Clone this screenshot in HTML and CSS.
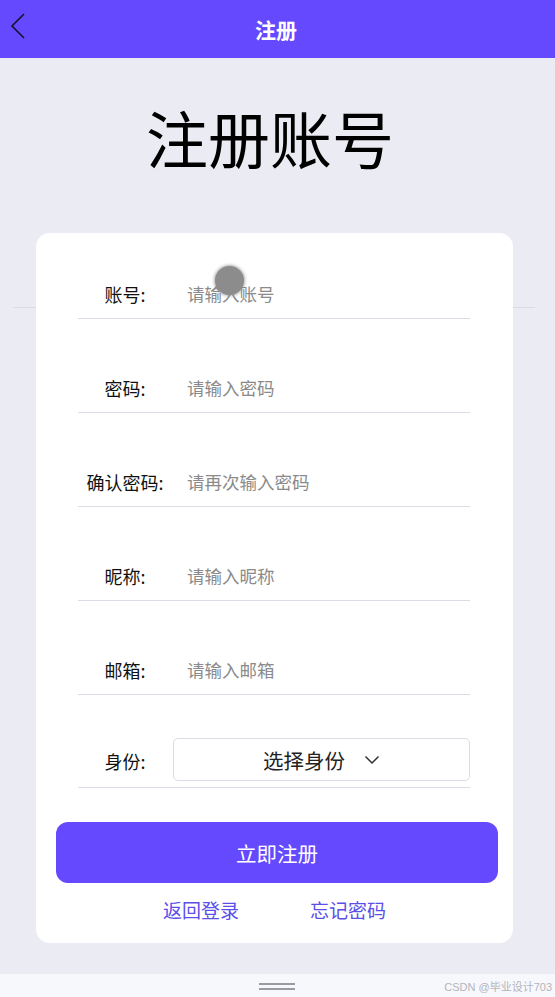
FILE: index.html
```html
<!DOCTYPE html>
<html lang="zh-CN">
<head>
    <meta charset="UTF-8">
    <meta name="viewport" content="width=device-width, initial-scale=1.0">
    <title>注册</title>
    <link rel="stylesheet" href="styles.css">
</head>
<body>
    <div id="page">
        <!-- 顶部导航 -->
        <div class="nav_bar">
            <div class="nav_back">
                <svg width="16" height="26" viewBox="0 0 16 26"><path d="M14 1 L2 13 L14 25" fill="none" stroke="#14142e" stroke-width="1.6"/></svg>
            </div>
            <div class="nav_title">注册</div>
        </div>
        <div class="main_title">注册账号</div>
        <div class="bg_line"></div>
        <!-- 表单 -->
        <div class="reg_card">
            <div class="reg_row">
                <div class="reg_label">账号:</div>
                <input class="reg_input" type="text" placeholder="请输入账号">
            </div>
            <div class="reg_row">
                <div class="reg_label">密码:</div>
                <input class="reg_input" type="password" placeholder="请输入密码">
            </div>
            <div class="reg_row">
                <div class="reg_label">确认密码:</div>
                <input class="reg_input" type="password" placeholder="请再次输入密码">
            </div>
            <div class="reg_row">
                <div class="reg_label">昵称:</div>
                <input class="reg_input" type="text" placeholder="请输入昵称">
            </div>
            <div class="reg_row">
                <div class="reg_label">邮箱:</div>
                <input class="reg_input" type="text" placeholder="请输入邮箱">
            </div>
            <div class="reg_row reg_row_last">
                <div class="reg_label">身份:</div>
                <div class="reg_select">
                    <span>选择身份</span>
                    <svg width="16" height="10" viewBox="0 0 16 10"><path d="M1.5 1.5 L8 8 L14.5 1.5" fill="none" stroke="#333" stroke-width="1.5"/></svg>
                </div>
            </div>
            <div class="reg_btn">立即注册</div>
            <div class="reg_links">
                <span>返回登录</span>
                <span>忘记密码</span>
            </div>
        </div>
        <div class="home_bar">
            <div class="home_handle"></div>
            <div class="home_mark">CSDN @毕业设计703</div>
        </div>
        <div class="touch_dot"></div>
    </div>
</body>
</html>
```

FILE: styles.css
```css
*{
    box-sizing: border-box;
}
body{
    margin: 0;
    background-color: #ebebf3;
    font-family: "Noto Sans CJK SC", "Noto Sans", sans-serif;
}
#page{
    position: relative;
    width: 555px;
    min-height: 997px;
    display: flex;
    flex-direction: column;
}
.nav_bar{
    height: 58px;
    background-color: #6549ff;
    display: flex;
    align-items: center;
    justify-content: center;
    position: relative;
}
.nav_back{
    position: absolute;
    left: 10px;
    top: 13px;
}
.nav_title{
    color: #fff;
    font-size: 21px;
    font-weight: bold;
    margin-left: -3px;
}
.main_title{
    margin-top: 47px;
    text-align: center;
    font-size: 62px;
    line-height: 64px;
    color: #000;
    margin-left: -15px;
}
.bg_line{
    position: absolute;
    top: 307px;
    left: 13px;
    right: 20px;
    height: 1px;
    background-color: #dcdce4;
}
.reg_card{
    position: relative;
    z-index: 1;
    margin-top: 64px;
    margin-left: 36px;
    width: 477px;
    height: 710px;
    background-color: #fff;
    border-radius: 14px;
    padding: 37px 43px 0 42px;
}
.reg_row{
    height: 49px;
    display: flex;
    align-items: center;
    border-bottom: 1px solid #dcdce4;
    margin-bottom: 45px;
}
.reg_row_last{
    margin-bottom: 0;
    height: 48px;
}
.reg_label{
    width: 94px;
    text-align: center;
    font-size: 18px;
    color: #111;
    flex-shrink: 0;
    white-space: nowrap;
}
.reg_row_last .reg_label{
    margin-top: -5px;
}
.reg_input{
    margin-left: 15px;
    flex: 1;
    min-width: 0;
    border: none;
    outline: none;
    font-family: inherit;
    font-size: 17.5px;
    color: #333;
    padding: 0;
    margin-top: -2px;
    background: transparent;
}
.reg_input::placeholder{
    color: #8a8a8a;
}
.reg_select{
    align-self: flex-start;
    margin-left: 1px;
    margin-top: -2px;
    flex: 1;
    height: 43px;
    border: 1px solid #dcdce4;
    border-radius: 5px;
    display: flex;
    align-items: center;
    justify-content: center;
    font-size: 20.5px;
    color: #222;
}
.reg_select>svg{
    margin-left: 19px;
}
.reg_btn{
    margin: 34px -28px 0 -22px;
    height: 61px;
    border-radius: 12px;
    background-color: #6549ff;
    color: #fff;
    font-size: 20.5px;
    display: flex;
    align-items: center;
    justify-content: center;
}
.reg_links{
    margin-top: 13px;
    margin-left: -42px;
    margin-right: -43px;
    display: flex;
    justify-content: center;
    gap: 71px;
    font-size: 19px;
    color: #5a4fe8;
}
.home_bar{
    margin-top: 31px;
    height: 24px;
    background-color: #f7f8fb;
    position: relative;
    display: flex;
    align-items: center;
    justify-content: center;
}
.home_handle{
    width: 36px;
    height: 7px;
    border-top: 2px solid #9a9aa0;
    border-bottom: 2px solid #9a9aa0;
    margin-left: -2px;
}
.home_mark{
    position: absolute;
    right: 3px;
    top: 4px;
    font-size: 11px;
    color: #b4b4bc;
    font-family: "Liberation Sans", "Noto Sans CJK SC", sans-serif;
}
.touch_dot{
    position: absolute;
    z-index: 2;
    left: 215px;
    top: 266px;
    width: 29px;
    height: 29px;
    border-radius: 50%;
    background-color: #8c8c8c;
    box-shadow: 0 0 3px 1px rgba(120,120,120,.6);
}
```
